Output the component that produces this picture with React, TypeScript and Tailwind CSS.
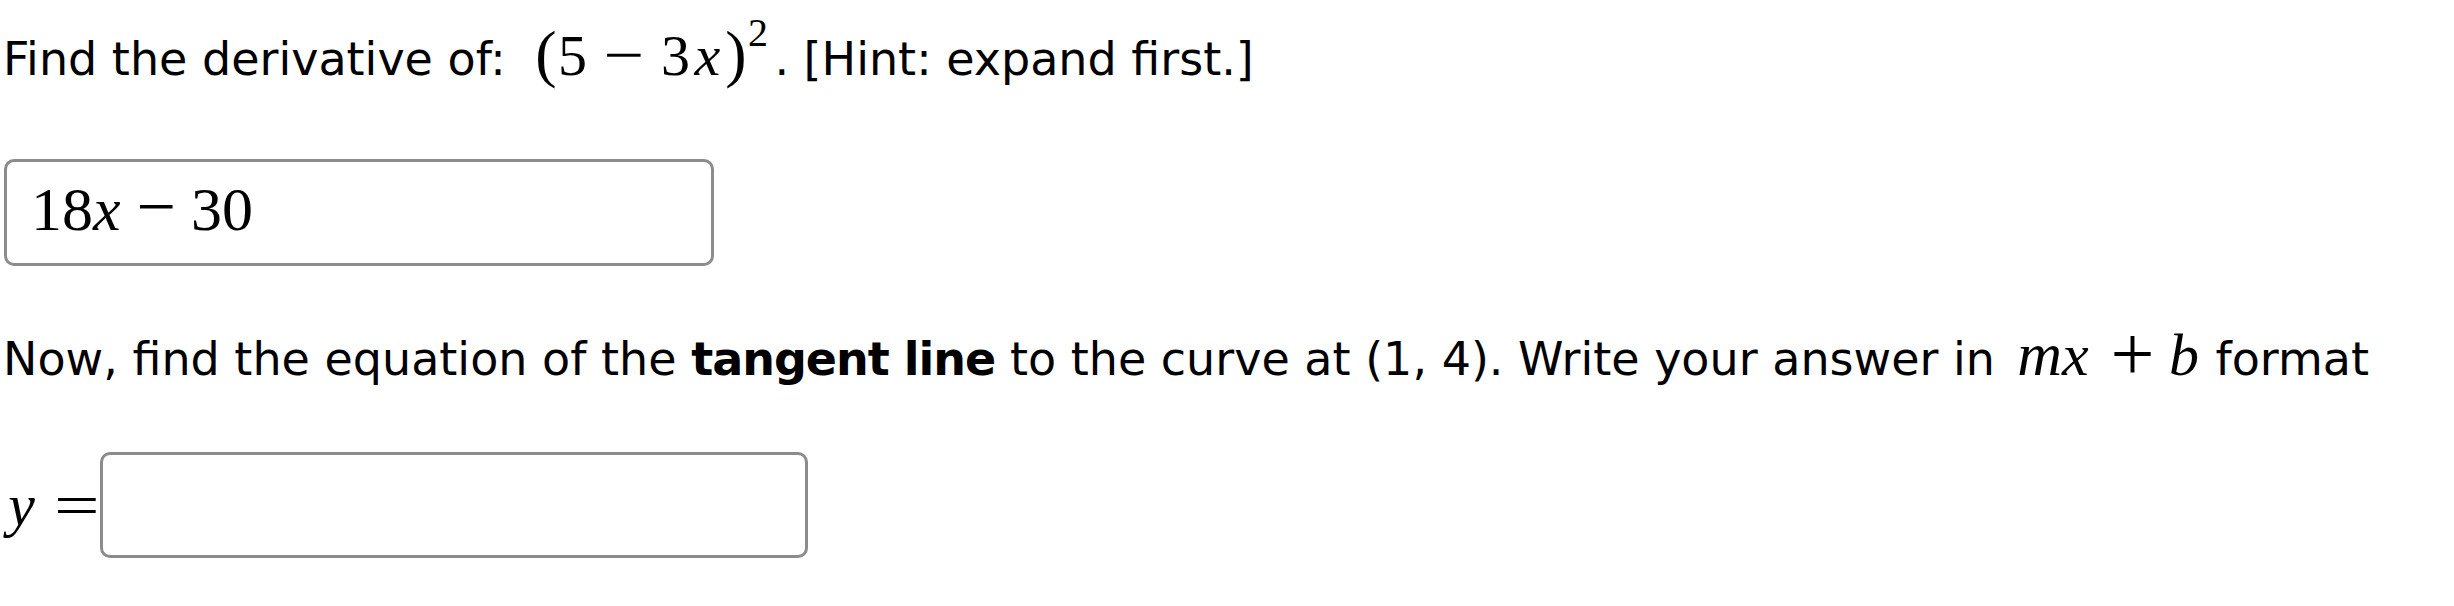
export default function App() {
  return (
    <div className="min-h-[606px] w-[2454px] bg-white pt-[29px] pl-[3px] text-black font-['DejaVu_Sans',sans-serif] text-[46px] leading-[60px]">
      <p className="whitespace-nowrap">
        Find the derivative of:{" "}
        <span className="font-['Liberation_Serif',serif] leading-[0]">
          <span className="ml-[14px] inline-block w-[23px] text-center text-[64px]">(</span>
          <span className="inline-block w-[30px] text-center text-[58px]">5</span>
          <span className="ml-[13px] inline-block w-[47px] text-center text-[60px]">
            <span className="inline-block scale-x-[1.2]">−</span>
          </span>
          <span className="ml-[13px] inline-block w-[30px] text-center text-[58px]">3</span>
          <span className="inline-block w-[34px] text-center text-[58px] italic">x</span>
          <span className="inline-block w-[23px] text-center text-[64px]">)</span>
          <span className="inline-block w-[21px] text-center text-[40px] align-[29px]">2</span>
        </span>
        <span className="ml-[6px]">.</span> [Hint: expand first.]
      </p>

      <div className="mt-[70px] ml-[1px] h-[107px] w-[710px] rounded-[10px] border-[3px] border-[#8c8c8c] pl-[24px] pt-[17px] font-['Liberation_Serif',serif] text-[62px] whitespace-nowrap">
        <span>18</span>
        <span className="italic">x</span>
        <span className="ml-[16px] text-[70px] leading-[0]">−</span>
        <span className="ml-[15px]">30</span>
      </div>

      <p className="mt-[63px] whitespace-nowrap">
        Now, find the equation of the{" "}
        <strong className="font-bold tracking-[-1px]">tangent line</strong> to the curve at (1, 4). Write your answer in
        <span className="font-['Liberation_Serif',serif] leading-[0]">
          <span className="ml-[14px] inline-block w-[53px] text-right text-[62px] italic">m</span>
          <span className="inline-block w-[34px] text-left text-[60px] italic">x</span>
          <span className="ml-[13px] inline-block w-[47px] text-center text-[78px] align-[-5px]">+</span>
          <span className="ml-[13px] inline-block w-[26px] text-center text-[60px] italic">b</span>
        </span>{" "}
        <span className="ml-[6px]">format</span>
      </p>

      <div className="mt-[63px] flex items-start">
        <div className="mt-[23px] whitespace-nowrap font-['Liberation_Serif',serif] text-[60px] leading-[60px]">
          <span className="ml-[4px] inline-block w-[29px] text-center italic">y</span>
          <span className="ml-[17px] inline-block w-[47px] text-center">
            <span className="inline-block scale-x-[1.35]">=</span>
          </span>
        </div>
        <div className="h-[106px] w-[708px] shrink-0 rounded-[10px] border-[3px] border-[#8c8c8c] bg-white" />
      </div>
    </div>
  );
}
